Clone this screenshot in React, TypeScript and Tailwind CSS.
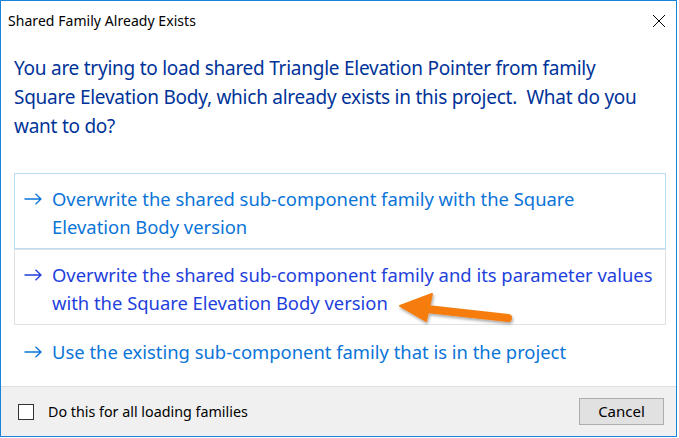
import React from "react";

const Arrow = () => (
  <svg width="18" height="12" viewBox="0 0 18 12" className="shrink-0">
    <path d="M0.5 6H17M11.5 0.8L17 6L11.5 11.2" fill="none" stroke="currentColor" strokeWidth="1.3" />
  </svg>
);

export default function App() {
  const font = { fontFamily: '"Noto Sans", "Open Sans", sans-serif' };
  return (
    <div className="relative w-[677px] h-[437px] border border-[#1883d7] bg-white flex flex-col" style={font}>
      <div className="h-[39px] flex items-center justify-between pl-[7px] pr-[10px]">
        <span className="text-[14px] text-black tracking-[0.05px]">Shared Family Already Exists</span>
        <svg width="14" height="14" viewBox="0 0 14 14">
          <path d="M1 1L13 13M13 1L1 13" stroke="#000" strokeWidth="1" />
        </svg>
      </div>
      <div className="flex-1 flex flex-col px-[13px]">
        <p className="mt-[14px] text-[19px] leading-[29px] text-[#003399] tracking-[-0.25px] whitespace-nowrap">
          You are trying to load shared Triangle Elevation Pointer from family
          <br />
          Square Elevation Body, which already exists in this project.&nbsp; What do you
          <br />
          want to do?
        </p>
        <div className="mt-[32px] flex flex-col w-[652px]">
          <div className="border border-[#b8dcf6] h-[76px] flex items-start gap-[10px] pl-[9px] pr-4 pt-[11px] text-[#0b74d8]">
            <div className="h-[28px] flex items-center"><Arrow /></div>
            <span className="text-[18.4px] leading-[28px] whitespace-nowrap">
              Overwrite the shared sub-component family with the Square
              <br />
              Elevation Body version
            </span>
          </div>
          <div className="border border-[#e1e1e1] h-[76px] flex items-start gap-[10px] pl-[9px] pr-4 pt-[11px] text-[#1e3fdc]">
            <div className="h-[28px] flex items-center"><Arrow /></div>
            <span className="text-[18.4px] leading-[28px] whitespace-nowrap">
              Overwrite the shared sub-component family and its parameter values
              <br />
              with the Square Elevation Body version
            </span>
          </div>
          <div className="border border-transparent flex items-start gap-[10px] pl-[9px] pt-[12px] text-[#0b74d8]">
            <div className="h-[28px] flex items-center"><Arrow /></div>
            <span className="text-[18.4px] leading-[28px] whitespace-nowrap">Use the existing sub-component family that is in the project</span>
          </div>
        </div>
      </div>
      <div className="h-[50px] bg-[#f0f0f0] border-t border-[#dfdfdf] flex items-center justify-between pl-[17px] pr-[12px]">
        <div className="flex items-center gap-[14px]">
          <div className="w-[16px] h-[16px] border border-[#333] bg-white" />
          <span className="text-[14.3px] text-black">Do this for all loading families</span>
        </div>
        <button className="w-[85px] h-[27px] bg-[#e1e1e1] border border-[#adadad] text-[15px] text-black">Cancel</button>
      </div>
      <svg className="absolute left-0 top-0 pointer-events-none" width="677" height="437">
        <defs>
          <filter id="sh" x="-20%" y="-50%" width="140%" height="200%">
            <feDropShadow dx="1" dy="2" stdDeviation="1.5" floodColor="#000" floodOpacity="0.35" />
          </filter>
        </defs>
        <g filter="url(#sh)" transform="translate(-1,-1)">
          <path d="M427 309L508 318" stroke="#f57c0c" strokeWidth="8" strokeLinecap="round" fill="none" />
          <path d="M400 306L432 294L426 321Z" fill="#f57c0c" stroke="#f57c0c" strokeWidth="2" strokeLinejoin="round" />
        </g>
      </svg>
    </div>
  );
}
